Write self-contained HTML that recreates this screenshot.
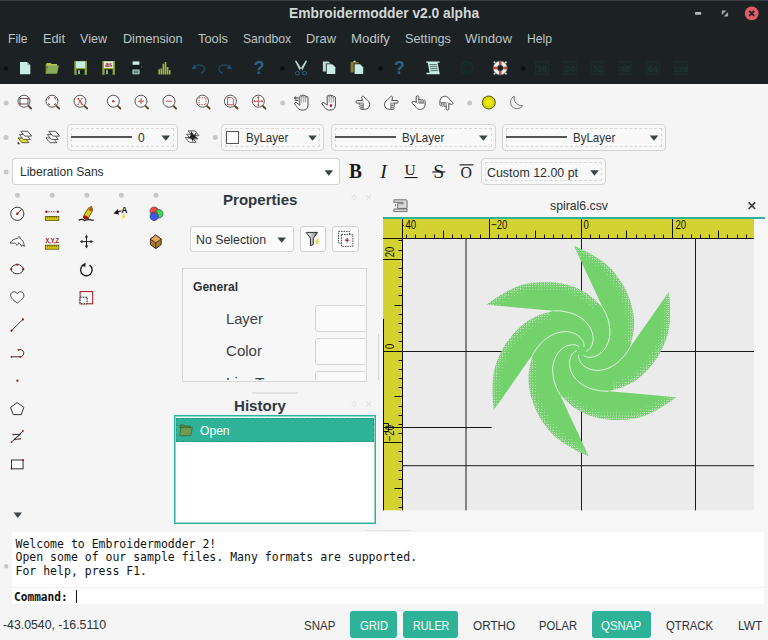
<!DOCTYPE html>
<html><head><meta charset="utf-8"><title>Embroidermodder v2.0 alpha</title>
<style>
html,body{margin:0;padding:0;}
body{width:768px;height:640px;overflow:hidden;background:#f5f5f5;position:relative;font-family:"Liberation Sans",sans-serif;font-size:13px;color:#2b3235;}
.a{position:absolute;box-sizing:border-box;}
.tx{position:absolute;white-space:pre;transform-origin:0 50%;}
.combo{border:1px solid #d4d4d4;border-radius:4px;background:#f9f9f9;}
.combo i{position:absolute;left:3px;top:3px;right:3px;bottom:3px;border:1px dashed #d8d8d8;}
.wbox{border:1px solid #d4d4d4;border-radius:3px;background:#fff;}
.btn{border:1px solid #d0d0d0;border-radius:3px;background:#fbfbfb;}
.sbb{top:611px;height:27px;background:#2eb398;border-radius:3px;}
svg{position:absolute;left:0;top:0;}

</style></head><body>
<div class="a" style="left:0;top:0;width:768px;height:84px;background:#1c2124"></div>
<div class="a" style="left:0;top:0;width:768px;height:1px;background:#3a4043"></div>
<!-- toolbar3 combos -->
<div class="a combo" style="left:67px;top:123.8px;width:111px;height:26.8px"><i></i></div>
<div class="a combo" style="left:221px;top:123.8px;width:103px;height:26.8px"><i></i></div>
<div class="a combo" style="left:331px;top:123.8px;width:164.5px;height:26.8px"><i></i></div>
<div class="a combo" style="left:502px;top:123.8px;width:163.6px;height:26.8px"><i></i></div>
<div class="a" style="left:226px;top:130.5px;width:13px;height:13px;background:#fff;border:1px solid #555"></div>
<!-- toolbar4 -->
<div class="a wbox" style="left:11.6px;top:158px;width:328.8px;height:26.5px"></div>
<div class="a combo" style="left:481.2px;top:158.2px;width:125px;height:26.4px"><i></i></div>
<!-- properties -->
<div class="a wbox" style="left:190px;top:225.5px;width:103.5px;height:26px;background:#fbfbfb"></div>
<div class="a btn" style="left:299.5px;top:225.5px;width:26.5px;height:26px"></div>
<div class="a btn" style="left:332px;top:225.5px;width:26.5px;height:26px"></div>
<div class="a" style="left:182px;top:268px;width:185px;height:114px;border:1px solid #d6d6d6;background:#f7f7f7"></div>
<div class="a" style="left:183px;top:269px;width:182px;height:110.6px;overflow:hidden">
  <div class="a wbox" style="left:132.3px;top:36.2px;width:70px;height:26.5px;background:#fafafa"></div>
  <div class="a wbox" style="left:132.3px;top:69.2px;width:70px;height:26.5px;background:#fafafa"></div>
  <div class="a wbox" style="left:132.3px;top:102px;width:70px;height:26.5px;background:#fafafa"></div>
  <div class="tx" style="left:42.8px;top:105.48px;font-size:14.2px;line-height:18px;color:#3a4246;transform:scaleX(1.08)">LineType</div>
</div>
<div class="a" style="left:377.5px;top:334px;width:1.6px;height:45.6px;background:#d2d2d2"></div>
<div class="a" style="left:251.5px;top:392.2px;width:46px;height:1.6px;background:#e2e2e2"></div>
<!-- history -->
<div class="a" style="left:173.5px;top:415px;width:202.5px;height:109px;border:1px solid #2eb398;background:#fff;box-shadow:inset 0 0 0 1px #8fd6c6"></div>
<div class="a" style="left:176px;top:418px;width:197.5px;height:23.5px;background:#2eb398"><div class="a" style="left:0;top:0;right:0;bottom:0;border:1px dashed #27977f"></div></div>
<div class="a" style="left:383px;top:219px;width:385px;height:310px;background:#f7f7f7"></div>
<!-- tab underline -->
<div class="a" style="left:383px;top:217px;width:382px;height:2px;background:#2eb398"></div>
<!-- console -->
<div class="a" style="left:11.5px;top:532px;width:752.5px;height:72px;background:#fff"></div>
<div class="a" style="left:11.5px;top:586.5px;width:752.5px;height:1px;background:#f2f2f2"></div>
<div class="a" style="left:76px;top:590px;width:1px;height:13px;background:#111"></div>
<div class="a" style="left:365px;top:529.5px;width:46px;height:1.8px;background:#e4e4e4"></div>
<!-- status buttons -->
<div class="a sbb" style="left:350.2px;width:47px"></div>
<div class="a sbb" style="left:403px;width:55px"></div>
<div class="a sbb" style="left:592px;width:59px"></div>

<svg width="768" height="640" viewBox="0 0 768 640"><rect x="403.0" y="239.0" width="351.0" height="271.3" fill="#ebebeb"/>
<rect x="465.5" y="239.0" width="1" height="271.3" fill="#1a1a1a"/>
<rect x="581" y="239.0" width="1" height="271.3" fill="#1a1a1a"/>
<rect x="695" y="239.0" width="1" height="271.3" fill="#1a1a1a"/>
<rect x="403.0" y="351" width="351.0" height="1" fill="#1a1a1a"/>
<rect x="403.0" y="465.2" width="351.0" height="1" fill="#1a1a1a"/>
<path d="M573.9,245.8 L581.3,248.9 L588.2,252.5 L594.6,256.3 L600.6,260.0 L606.2,264.2 L611.2,268.9 L615.5,274.1 L619.4,279.4 L622.8,284.6 L625.7,289.9 L628.0,295.3 L630.0,300.5 L631.6,305.7 L632.8,310.8 L633.6,315.7 L634.0,320.6 L634.0,325.3 L633.7,329.8 L633.1,334.2 L632.2,338.3 L631.1,342.2 L630.1,345.9 L628.5,349.4 L626.5,352.6 L624.2,355.5 L621.8,358.1 L619.6,360.5 L617.1,362.6 L614.6,364.5 L612.1,366.0 L609.7,367.4 L607.1,368.4 L604.6,369.2 L602.1,369.7 L599.7,370.1 L597.4,370.2 L595.2,370.1 L593.1,369.8 L591.0,369.3 L589.2,368.7 L587.5,368.0 L585.9,367.2 L584.5,366.2 L583.3,365.1 L582.2,364.0 L581.3,363.0 L580.5,362.1 L579.9,361.0 L579.4,360.0 L579.0,358.9 L578.8,357.8 L578.7,356.8 L578.7,355.9 L578.8,355.1 L578.9,354.2 L579.2,353.5 L579.6,352.7 L580.1,352.1 L580.7,351.5 L581.3,351.0 L581.3,351.0 L581.4,351.8 L581.6,352.6 L582.0,353.3 L582.4,354.0 L582.9,354.7 L583.6,355.2 L584.3,355.7 L585.1,356.2 L586.0,356.5 L587.0,356.9 L588.1,357.1 L589.3,357.2 L590.5,357.2 L591.7,357.0 L593.0,356.7 L594.5,356.3 L596.1,355.8 L597.6,355.1 L599.1,354.1 L600.6,353.0 L602.0,351.7 L603.5,350.2 L604.8,348.5 L606.0,346.6 L607.1,344.6 L607.9,342.3 L608.7,339.9 L609.3,337.3 L609.7,334.6 L609.7,331.8 L609.6,328.9 L609.3,325.8 L608.7,322.6 L607.8,319.5 L606.7,316.1 L605.3,312.7 L603.5,309.3 Q588.7,277.5 573.9,245.8 Z M668.8,292.0 L669.7,299.9 L670.0,307.7 L670.0,315.2 L669.7,322.3 L669.0,329.1 L667.3,335.8 L665.0,342.2 L662.4,348.2 L659.6,353.7 L656.4,358.9 L652.9,363.6 L649.4,368.0 L645.7,371.9 L641.9,375.5 L638.0,378.7 L634.0,381.4 L629.9,383.8 L625.8,385.8 L621.8,387.5 L617.8,388.8 L613.8,389.8 L610.1,390.7 L606.3,391.1 L602.5,390.9 L598.8,390.4 L595.4,389.7 L592.2,388.9 L589.1,387.9 L586.3,386.6 L583.7,385.2 L581.3,383.7 L579.1,382.1 L577.2,380.3 L575.5,378.4 L574.0,376.5 L572.7,374.6 L571.7,372.6 L570.9,370.6 L570.3,368.6 L569.9,366.7 L569.7,364.9 L569.6,363.1 L569.7,361.4 L570.1,359.8 L570.5,358.3 L570.9,357.0 L571.3,355.9 L571.9,354.8 L572.6,353.8 L573.3,353.0 L574.2,352.3 L574.9,351.7 L575.7,351.2 L576.5,350.8 L577.3,350.6 L578.1,350.4 L579.0,350.4 L579.8,350.5 L580.6,350.7 L581.3,351.0 L581.3,351.0 L580.7,351.5 L580.1,352.1 L579.6,352.7 L579.2,353.5 L578.9,354.2 L578.8,355.1 L578.7,355.9 L578.7,356.8 L578.8,357.8 L579.0,358.9 L579.4,360.0 L579.9,361.0 L580.5,362.1 L581.3,363.0 L582.2,364.0 L583.3,365.1 L584.5,366.2 L585.9,367.2 L587.5,368.0 L589.2,368.7 L591.0,369.3 L593.1,369.8 L595.2,370.1 L597.4,370.2 L599.7,370.1 L602.1,369.7 L604.6,369.2 L607.1,368.4 L609.7,367.4 L612.1,366.0 L614.6,364.5 L617.1,362.6 L619.6,360.5 L621.8,358.1 L624.2,355.5 L626.5,352.6 L628.5,349.4 Q648.7,320.7 668.8,292.0 Z M676.1,397.2 L669.7,402.1 L663.1,406.2 L656.7,409.9 L650.4,413.2 L644.1,416.0 L637.5,417.9 L630.7,419.1 L624.3,419.8 L618.1,420.1 L612.0,420.0 L606.2,419.3 L600.6,418.4 L595.4,417.2 L590.4,415.7 L585.7,413.9 L581.3,411.8 L577.2,409.5 L573.4,407.0 L570.0,404.3 L566.8,401.5 L564.0,398.6 L561.3,395.8 L559.1,392.7 L557.3,389.3 L555.9,385.9 L554.8,382.5 L553.9,379.4 L553.3,376.2 L553.0,373.1 L552.9,370.2 L552.9,367.4 L553.3,364.7 L553.9,362.1 L554.7,359.7 L555.5,357.4 L556.6,355.4 L557.8,353.5 L559.1,351.8 L560.6,350.3 L562.0,349.0 L563.5,347.9 L565.0,346.9 L566.5,346.2 L568.1,345.7 L569.6,345.3 L570.9,345.0 L572.1,344.8 L573.3,344.8 L574.5,344.9 L575.6,345.1 L576.6,345.5 L577.5,345.8 L578.3,346.3 L579.0,346.8 L579.7,347.3 L580.2,348.0 L580.6,348.7 L581.0,349.4 L581.2,350.2 L581.3,351.0 L581.3,351.0 L580.6,350.7 L579.8,350.5 L579.0,350.4 L578.1,350.4 L577.3,350.6 L576.5,350.8 L575.7,351.2 L574.9,351.7 L574.2,352.3 L573.3,353.0 L572.6,353.8 L571.9,354.8 L571.3,355.9 L570.9,357.0 L570.5,358.3 L570.1,359.8 L569.7,361.4 L569.6,363.1 L569.7,364.9 L569.9,366.7 L570.3,368.6 L570.9,370.6 L571.7,372.6 L572.7,374.6 L574.0,376.5 L575.5,378.4 L577.2,380.3 L579.1,382.1 L581.3,383.7 L583.7,385.2 L586.3,386.6 L589.1,387.9 L592.2,388.9 L595.4,389.7 L598.8,390.4 L602.5,390.9 L606.3,391.1 Q641.2,394.2 676.1,397.2 Z M588.7,456.2 L581.3,453.1 L574.4,449.5 L568.0,445.7 L562.0,442.0 L556.4,437.8 L551.4,433.1 L547.1,427.9 L543.2,422.6 L539.8,417.4 L536.9,412.1 L534.6,406.7 L532.6,401.5 L531.0,396.3 L529.8,391.2 L529.0,386.3 L528.6,381.4 L528.6,376.7 L528.9,372.2 L529.5,367.8 L530.4,363.7 L531.5,359.8 L532.5,356.1 L534.1,352.6 L536.1,349.4 L538.4,346.5 L540.8,343.9 L543.0,341.5 L545.5,339.4 L548.0,337.5 L550.5,336.0 L552.9,334.6 L555.5,333.6 L558.0,332.8 L560.5,332.3 L562.9,331.9 L565.2,331.8 L567.4,331.9 L569.5,332.2 L571.6,332.7 L573.4,333.3 L575.1,334.0 L576.7,334.8 L578.1,335.8 L579.3,336.9 L580.4,338.0 L581.3,339.0 L582.1,339.9 L582.7,341.0 L583.2,342.0 L583.6,343.1 L583.8,344.2 L583.9,345.2 L583.9,346.1 L583.8,346.9 L583.7,347.8 L583.4,348.5 L583.0,349.3 L582.5,349.9 L581.9,350.5 L581.3,351.0 L581.3,351.0 L581.2,350.2 L581.0,349.4 L580.6,348.7 L580.2,348.0 L579.7,347.3 L579.0,346.8 L578.3,346.3 L577.5,345.8 L576.6,345.5 L575.6,345.1 L574.5,344.9 L573.3,344.8 L572.1,344.8 L570.9,345.0 L569.6,345.3 L568.1,345.7 L566.5,346.2 L565.0,346.9 L563.5,347.9 L562.0,349.0 L560.6,350.3 L559.1,351.8 L557.8,353.5 L556.6,355.4 L555.5,357.4 L554.7,359.7 L553.9,362.1 L553.3,364.7 L552.9,367.4 L552.9,370.2 L553.0,373.1 L553.3,376.2 L553.9,379.4 L554.8,382.5 L555.9,385.9 L557.3,389.3 L559.1,392.7 Q573.9,424.5 588.7,456.2 Z M493.8,410.0 L492.9,402.1 L492.6,394.3 L492.6,386.8 L492.9,379.7 L493.6,372.9 L495.3,366.2 L497.6,359.8 L500.2,353.8 L503.0,348.3 L506.2,343.1 L509.7,338.4 L513.2,334.0 L516.9,330.1 L520.7,326.5 L524.6,323.3 L528.6,320.6 L532.7,318.2 L536.8,316.2 L540.8,314.5 L544.8,313.2 L548.8,312.2 L552.5,311.3 L556.3,310.9 L560.1,311.1 L563.8,311.6 L567.2,312.3 L570.4,313.1 L573.5,314.1 L576.3,315.4 L578.9,316.8 L581.3,318.3 L583.5,319.9 L585.4,321.7 L587.1,323.6 L588.6,325.5 L589.9,327.4 L590.9,329.4 L591.7,331.4 L592.3,333.4 L592.7,335.3 L592.9,337.1 L593.0,338.9 L592.9,340.6 L592.5,342.2 L592.1,343.7 L591.7,345.0 L591.3,346.1 L590.7,347.2 L590.0,348.2 L589.3,349.0 L588.4,349.7 L587.7,350.3 L586.9,350.8 L586.1,351.2 L585.3,351.4 L584.5,351.6 L583.6,351.6 L582.8,351.5 L582.0,351.3 L581.3,351.0 L581.3,351.0 L581.9,350.5 L582.5,349.9 L583.0,349.3 L583.4,348.5 L583.7,347.8 L583.8,346.9 L583.9,346.1 L583.9,345.2 L583.8,344.2 L583.6,343.1 L583.2,342.0 L582.7,341.0 L582.1,339.9 L581.3,339.0 L580.4,338.0 L579.3,336.9 L578.1,335.8 L576.7,334.8 L575.1,334.0 L573.4,333.3 L571.6,332.7 L569.5,332.2 L567.4,331.9 L565.2,331.8 L562.9,331.9 L560.5,332.3 L558.0,332.8 L555.5,333.6 L552.9,334.6 L550.5,336.0 L548.0,337.5 L545.5,339.4 L543.0,341.5 L540.8,343.9 L538.4,346.5 L536.1,349.4 L534.1,352.6 Q513.9,381.3 493.8,410.0 Z M486.5,304.8 L492.9,299.9 L499.5,295.8 L505.9,292.1 L512.2,288.8 L518.5,286.0 L525.1,284.1 L531.9,282.9 L538.3,282.2 L544.5,281.9 L550.6,282.0 L556.4,282.7 L562.0,283.6 L567.2,284.8 L572.2,286.3 L576.9,288.1 L581.3,290.2 L585.4,292.5 L589.2,295.0 L592.6,297.7 L595.8,300.5 L598.6,303.4 L601.3,306.2 L603.5,309.3 L605.3,312.7 L606.7,316.1 L607.8,319.5 L608.7,322.6 L609.3,325.8 L609.6,328.9 L609.7,331.8 L609.7,334.6 L609.3,337.3 L608.7,339.9 L607.9,342.3 L607.1,344.6 L606.0,346.6 L604.8,348.5 L603.5,350.2 L602.0,351.7 L600.6,353.0 L599.1,354.1 L597.6,355.1 L596.1,355.8 L594.5,356.3 L593.0,356.7 L591.7,357.0 L590.5,357.2 L589.3,357.2 L588.1,357.1 L587.0,356.9 L586.0,356.5 L585.1,356.2 L584.3,355.7 L583.6,355.2 L582.9,354.7 L582.4,354.0 L582.0,353.3 L581.6,352.6 L581.4,351.8 L581.3,351.0 L581.3,351.0 L582.0,351.3 L582.8,351.5 L583.6,351.6 L584.5,351.6 L585.3,351.4 L586.1,351.2 L586.9,350.8 L587.7,350.3 L588.4,349.7 L589.3,349.0 L590.0,348.2 L590.7,347.2 L591.3,346.1 L591.7,345.0 L592.1,343.7 L592.5,342.2 L592.9,340.6 L593.0,338.9 L592.9,337.1 L592.7,335.3 L592.3,333.4 L591.7,331.4 L590.9,329.4 L589.9,327.4 L588.6,325.5 L587.1,323.6 L585.4,321.7 L583.5,319.9 L581.3,318.3 L578.9,316.8 L576.3,315.4 L573.5,314.1 L570.4,313.1 L567.2,312.3 L563.8,311.6 L560.1,311.1 L556.3,310.9 Q521.4,307.8 486.5,304.8 Z" fill="#73d26b"/>
<defs><pattern id="stip" width="2" height="2" patternUnits="userSpaceOnUse"><rect x="0" y="0" width="1" height="1" fill="#ebebeb" opacity="0.55"/></pattern><pattern id="stip2" width="3" height="3" patternUnits="userSpaceOnUse"><rect x="1" y="1" width="1" height="1" fill="#ebebeb" opacity="0.45"/></pattern><clipPath id="ac0"><path d="M573.9,245.8 L581.3,248.9 L588.2,252.5 L594.6,256.3 L600.6,260.0 L606.2,264.2 L611.2,268.9 L615.5,274.1 L619.4,279.4 L622.8,284.6 L625.7,289.9 L628.0,295.3 L630.0,300.5 L631.6,305.7 L632.8,310.8 L633.6,315.7 L634.0,320.6 L634.0,325.3 L633.7,329.8 L633.1,334.2 L632.2,338.3 L631.1,342.2 L630.1,345.9 L628.5,349.4 L626.5,352.6 L624.2,355.5 L621.8,358.1 L619.6,360.5 L617.1,362.6 L614.6,364.5 L612.1,366.0 L609.7,367.4 L607.1,368.4 L604.6,369.2 L602.1,369.7 L599.7,370.1 L597.4,370.2 L595.2,370.1 L593.1,369.8 L591.0,369.3 L589.2,368.7 L587.5,368.0 L585.9,367.2 L584.5,366.2 L583.3,365.1 L582.2,364.0 L581.3,363.0 L580.5,362.1 L579.9,361.0 L579.4,360.0 L579.0,358.9 L578.8,357.8 L578.7,356.8 L578.7,355.9 L578.8,355.1 L578.9,354.2 L579.2,353.5 L579.6,352.7 L580.1,352.1 L580.7,351.5 L581.3,351.0 L581.3,351.0 L581.4,351.8 L581.6,352.6 L582.0,353.3 L582.4,354.0 L582.9,354.7 L583.6,355.2 L584.3,355.7 L585.1,356.2 L586.0,356.5 L587.0,356.9 L588.1,357.1 L589.3,357.2 L590.5,357.2 L591.7,357.0 L593.0,356.7 L594.5,356.3 L596.1,355.8 L597.6,355.1 L599.1,354.1 L600.6,353.0 L602.0,351.7 L603.5,350.2 L604.8,348.5 L606.0,346.6 L607.1,344.6 L607.9,342.3 L608.7,339.9 L609.3,337.3 L609.7,334.6 L609.7,331.8 L609.6,328.9 L609.3,325.8 L608.7,322.6 L607.8,319.5 L606.7,316.1 L605.3,312.7 L603.5,309.3 Q588.7,277.5 573.9,245.8 Z"/></clipPath><clipPath id="ac1"><path d="M668.8,292.0 L669.7,299.9 L670.0,307.7 L670.0,315.2 L669.7,322.3 L669.0,329.1 L667.3,335.8 L665.0,342.2 L662.4,348.2 L659.6,353.7 L656.4,358.9 L652.9,363.6 L649.4,368.0 L645.7,371.9 L641.9,375.5 L638.0,378.7 L634.0,381.4 L629.9,383.8 L625.8,385.8 L621.8,387.5 L617.8,388.8 L613.8,389.8 L610.1,390.7 L606.3,391.1 L602.5,390.9 L598.8,390.4 L595.4,389.7 L592.2,388.9 L589.1,387.9 L586.3,386.6 L583.7,385.2 L581.3,383.7 L579.1,382.1 L577.2,380.3 L575.5,378.4 L574.0,376.5 L572.7,374.6 L571.7,372.6 L570.9,370.6 L570.3,368.6 L569.9,366.7 L569.7,364.9 L569.6,363.1 L569.7,361.4 L570.1,359.8 L570.5,358.3 L570.9,357.0 L571.3,355.9 L571.9,354.8 L572.6,353.8 L573.3,353.0 L574.2,352.3 L574.9,351.7 L575.7,351.2 L576.5,350.8 L577.3,350.6 L578.1,350.4 L579.0,350.4 L579.8,350.5 L580.6,350.7 L581.3,351.0 L581.3,351.0 L580.7,351.5 L580.1,352.1 L579.6,352.7 L579.2,353.5 L578.9,354.2 L578.8,355.1 L578.7,355.9 L578.7,356.8 L578.8,357.8 L579.0,358.9 L579.4,360.0 L579.9,361.0 L580.5,362.1 L581.3,363.0 L582.2,364.0 L583.3,365.1 L584.5,366.2 L585.9,367.2 L587.5,368.0 L589.2,368.7 L591.0,369.3 L593.1,369.8 L595.2,370.1 L597.4,370.2 L599.7,370.1 L602.1,369.7 L604.6,369.2 L607.1,368.4 L609.7,367.4 L612.1,366.0 L614.6,364.5 L617.1,362.6 L619.6,360.5 L621.8,358.1 L624.2,355.5 L626.5,352.6 L628.5,349.4 Q648.7,320.7 668.8,292.0 Z"/></clipPath><clipPath id="ac2"><path d="M676.1,397.2 L669.7,402.1 L663.1,406.2 L656.7,409.9 L650.4,413.2 L644.1,416.0 L637.5,417.9 L630.7,419.1 L624.3,419.8 L618.1,420.1 L612.0,420.0 L606.2,419.3 L600.6,418.4 L595.4,417.2 L590.4,415.7 L585.7,413.9 L581.3,411.8 L577.2,409.5 L573.4,407.0 L570.0,404.3 L566.8,401.5 L564.0,398.6 L561.3,395.8 L559.1,392.7 L557.3,389.3 L555.9,385.9 L554.8,382.5 L553.9,379.4 L553.3,376.2 L553.0,373.1 L552.9,370.2 L552.9,367.4 L553.3,364.7 L553.9,362.1 L554.7,359.7 L555.5,357.4 L556.6,355.4 L557.8,353.5 L559.1,351.8 L560.6,350.3 L562.0,349.0 L563.5,347.9 L565.0,346.9 L566.5,346.2 L568.1,345.7 L569.6,345.3 L570.9,345.0 L572.1,344.8 L573.3,344.8 L574.5,344.9 L575.6,345.1 L576.6,345.5 L577.5,345.8 L578.3,346.3 L579.0,346.8 L579.7,347.3 L580.2,348.0 L580.6,348.7 L581.0,349.4 L581.2,350.2 L581.3,351.0 L581.3,351.0 L580.6,350.7 L579.8,350.5 L579.0,350.4 L578.1,350.4 L577.3,350.6 L576.5,350.8 L575.7,351.2 L574.9,351.7 L574.2,352.3 L573.3,353.0 L572.6,353.8 L571.9,354.8 L571.3,355.9 L570.9,357.0 L570.5,358.3 L570.1,359.8 L569.7,361.4 L569.6,363.1 L569.7,364.9 L569.9,366.7 L570.3,368.6 L570.9,370.6 L571.7,372.6 L572.7,374.6 L574.0,376.5 L575.5,378.4 L577.2,380.3 L579.1,382.1 L581.3,383.7 L583.7,385.2 L586.3,386.6 L589.1,387.9 L592.2,388.9 L595.4,389.7 L598.8,390.4 L602.5,390.9 L606.3,391.1 Q641.2,394.2 676.1,397.2 Z"/></clipPath><clipPath id="ac3"><path d="M588.7,456.2 L581.3,453.1 L574.4,449.5 L568.0,445.7 L562.0,442.0 L556.4,437.8 L551.4,433.1 L547.1,427.9 L543.2,422.6 L539.8,417.4 L536.9,412.1 L534.6,406.7 L532.6,401.5 L531.0,396.3 L529.8,391.2 L529.0,386.3 L528.6,381.4 L528.6,376.7 L528.9,372.2 L529.5,367.8 L530.4,363.7 L531.5,359.8 L532.5,356.1 L534.1,352.6 L536.1,349.4 L538.4,346.5 L540.8,343.9 L543.0,341.5 L545.5,339.4 L548.0,337.5 L550.5,336.0 L552.9,334.6 L555.5,333.6 L558.0,332.8 L560.5,332.3 L562.9,331.9 L565.2,331.8 L567.4,331.9 L569.5,332.2 L571.6,332.7 L573.4,333.3 L575.1,334.0 L576.7,334.8 L578.1,335.8 L579.3,336.9 L580.4,338.0 L581.3,339.0 L582.1,339.9 L582.7,341.0 L583.2,342.0 L583.6,343.1 L583.8,344.2 L583.9,345.2 L583.9,346.1 L583.8,346.9 L583.7,347.8 L583.4,348.5 L583.0,349.3 L582.5,349.9 L581.9,350.5 L581.3,351.0 L581.3,351.0 L581.2,350.2 L581.0,349.4 L580.6,348.7 L580.2,348.0 L579.7,347.3 L579.0,346.8 L578.3,346.3 L577.5,345.8 L576.6,345.5 L575.6,345.1 L574.5,344.9 L573.3,344.8 L572.1,344.8 L570.9,345.0 L569.6,345.3 L568.1,345.7 L566.5,346.2 L565.0,346.9 L563.5,347.9 L562.0,349.0 L560.6,350.3 L559.1,351.8 L557.8,353.5 L556.6,355.4 L555.5,357.4 L554.7,359.7 L553.9,362.1 L553.3,364.7 L552.9,367.4 L552.9,370.2 L553.0,373.1 L553.3,376.2 L553.9,379.4 L554.8,382.5 L555.9,385.9 L557.3,389.3 L559.1,392.7 Q573.9,424.5 588.7,456.2 Z"/></clipPath><clipPath id="ac4"><path d="M493.8,410.0 L492.9,402.1 L492.6,394.3 L492.6,386.8 L492.9,379.7 L493.6,372.9 L495.3,366.2 L497.6,359.8 L500.2,353.8 L503.0,348.3 L506.2,343.1 L509.7,338.4 L513.2,334.0 L516.9,330.1 L520.7,326.5 L524.6,323.3 L528.6,320.6 L532.7,318.2 L536.8,316.2 L540.8,314.5 L544.8,313.2 L548.8,312.2 L552.5,311.3 L556.3,310.9 L560.1,311.1 L563.8,311.6 L567.2,312.3 L570.4,313.1 L573.5,314.1 L576.3,315.4 L578.9,316.8 L581.3,318.3 L583.5,319.9 L585.4,321.7 L587.1,323.6 L588.6,325.5 L589.9,327.4 L590.9,329.4 L591.7,331.4 L592.3,333.4 L592.7,335.3 L592.9,337.1 L593.0,338.9 L592.9,340.6 L592.5,342.2 L592.1,343.7 L591.7,345.0 L591.3,346.1 L590.7,347.2 L590.0,348.2 L589.3,349.0 L588.4,349.7 L587.7,350.3 L586.9,350.8 L586.1,351.2 L585.3,351.4 L584.5,351.6 L583.6,351.6 L582.8,351.5 L582.0,351.3 L581.3,351.0 L581.3,351.0 L581.9,350.5 L582.5,349.9 L583.0,349.3 L583.4,348.5 L583.7,347.8 L583.8,346.9 L583.9,346.1 L583.9,345.2 L583.8,344.2 L583.6,343.1 L583.2,342.0 L582.7,341.0 L582.1,339.9 L581.3,339.0 L580.4,338.0 L579.3,336.9 L578.1,335.8 L576.7,334.8 L575.1,334.0 L573.4,333.3 L571.6,332.7 L569.5,332.2 L567.4,331.9 L565.2,331.8 L562.9,331.9 L560.5,332.3 L558.0,332.8 L555.5,333.6 L552.9,334.6 L550.5,336.0 L548.0,337.5 L545.5,339.4 L543.0,341.5 L540.8,343.9 L538.4,346.5 L536.1,349.4 L534.1,352.6 Q513.9,381.3 493.8,410.0 Z"/></clipPath><clipPath id="ac5"><path d="M486.5,304.8 L492.9,299.9 L499.5,295.8 L505.9,292.1 L512.2,288.8 L518.5,286.0 L525.1,284.1 L531.9,282.9 L538.3,282.2 L544.5,281.9 L550.6,282.0 L556.4,282.7 L562.0,283.6 L567.2,284.8 L572.2,286.3 L576.9,288.1 L581.3,290.2 L585.4,292.5 L589.2,295.0 L592.6,297.7 L595.8,300.5 L598.6,303.4 L601.3,306.2 L603.5,309.3 L605.3,312.7 L606.7,316.1 L607.8,319.5 L608.7,322.6 L609.3,325.8 L609.6,328.9 L609.7,331.8 L609.7,334.6 L609.3,337.3 L608.7,339.9 L607.9,342.3 L607.1,344.6 L606.0,346.6 L604.8,348.5 L603.5,350.2 L602.0,351.7 L600.6,353.0 L599.1,354.1 L597.6,355.1 L596.1,355.8 L594.5,356.3 L593.0,356.7 L591.7,357.0 L590.5,357.2 L589.3,357.2 L588.1,357.1 L587.0,356.9 L586.0,356.5 L585.1,356.2 L584.3,355.7 L583.6,355.2 L582.9,354.7 L582.4,354.0 L582.0,353.3 L581.6,352.6 L581.4,351.8 L581.3,351.0 L581.3,351.0 L582.0,351.3 L582.8,351.5 L583.6,351.6 L584.5,351.6 L585.3,351.4 L586.1,351.2 L586.9,350.8 L587.7,350.3 L588.4,349.7 L589.3,349.0 L590.0,348.2 L590.7,347.2 L591.3,346.1 L591.7,345.0 L592.1,343.7 L592.5,342.2 L592.9,340.6 L593.0,338.9 L592.9,337.1 L592.7,335.3 L592.3,333.4 L591.7,331.4 L590.9,329.4 L589.9,327.4 L588.6,325.5 L587.1,323.6 L585.4,321.7 L583.5,319.9 L581.3,318.3 L578.9,316.8 L576.3,315.4 L573.5,314.1 L570.4,313.1 L567.2,312.3 L563.8,311.6 L560.1,311.1 L556.3,310.9 Q521.4,307.8 486.5,304.8 Z"/></clipPath></defs>
<g clip-path="url(#ac0)"><path d="M573.9,245.8 L579.5,248.1 L584.8,250.7 L589.8,253.5 L594.6,256.3 L599.2,259.1 L603.5,262.1 L607.5,265.3 L611.2,268.9 L614.5,272.8 L617.5,276.8 L620.3,280.7 L622.8,284.6 L625.0,288.6 L626.9,292.6 L628.5,296.7 L630.0,300.5 L631.3,304.4 L632.2,308.3 L633.0,312.0 L633.6,315.7 L633.9,319.4 L634.0,323.0 L634.0,326.4 L633.7,329.8 L633.3,333.1 L632.7,336.3 L632.0,339.3 L631.1,342.2" fill="none" stroke="url(#stip2)" stroke-width="16"/><path d="M573.9,245.8 L579.5,248.1 L584.8,250.7 L589.8,253.5 L594.6,256.3 L599.2,259.1 L603.5,262.1 L607.5,265.3 L611.2,268.9 L614.5,272.8 L617.5,276.8 L620.3,280.7 L622.8,284.6 L625.0,288.6 L626.9,292.6 L628.5,296.7 L630.0,300.5 L631.3,304.4 L632.2,308.3 L633.0,312.0 L633.6,315.7 L633.9,319.4 L634.0,323.0 L634.0,326.4 L633.7,329.8 L633.3,333.1 L632.7,336.3 L632.0,339.3 L631.1,342.2" fill="none" stroke="url(#stip)" stroke-width="7"/></g>
<g clip-path="url(#ac1)"><path d="M668.8,292.0 L669.5,298.0 L669.9,303.9 L670.0,309.6 L670.0,315.2 L669.9,320.5 L669.4,325.7 L668.7,330.8 L667.3,335.8 L665.6,340.6 L663.6,345.2 L661.7,349.6 L659.6,353.7 L657.2,357.6 L654.7,361.3 L652.0,364.7 L649.4,368.0 L646.6,371.0 L643.8,373.7 L640.9,376.3 L638.0,378.7 L635.0,380.8 L631.9,382.6 L628.9,384.3 L625.8,385.8 L622.8,387.1 L619.8,388.2 L616.8,389.0 L613.8,389.8" fill="none" stroke="url(#stip2)" stroke-width="16"/><path d="M668.8,292.0 L669.5,298.0 L669.9,303.9 L670.0,309.6 L670.0,315.2 L669.9,320.5 L669.4,325.7 L668.7,330.8 L667.3,335.8 L665.6,340.6 L663.6,345.2 L661.7,349.6 L659.6,353.7 L657.2,357.6 L654.7,361.3 L652.0,364.7 L649.4,368.0 L646.6,371.0 L643.8,373.7 L640.9,376.3 L638.0,378.7 L635.0,380.8 L631.9,382.6 L628.9,384.3 L625.8,385.8 L622.8,387.1 L619.8,388.2 L616.8,389.0 L613.8,389.8" fill="none" stroke="url(#stip)" stroke-width="7"/></g>
<g clip-path="url(#ac2)"><path d="M676.1,397.2 L671.3,400.9 L666.4,404.2 L661.5,407.1 L656.7,409.9 L652.0,412.5 L647.2,414.7 L642.5,416.6 L637.5,417.9 L632.4,418.8 L627.4,419.4 L622.7,419.9 L618.1,420.1 L613.5,420.1 L609.1,419.7 L604.7,419.1 L600.6,418.4 L596.7,417.6 L592.8,416.5 L589.2,415.3 L585.7,413.9 L582.4,412.4 L579.2,410.7 L576.2,408.9 L573.4,407.0 L570.8,405.0 L568.4,402.9 L566.1,400.7 L564.0,398.6" fill="none" stroke="url(#stip2)" stroke-width="16"/><path d="M676.1,397.2 L671.3,400.9 L666.4,404.2 L661.5,407.1 L656.7,409.9 L652.0,412.5 L647.2,414.7 L642.5,416.6 L637.5,417.9 L632.4,418.8 L627.4,419.4 L622.7,419.9 L618.1,420.1 L613.5,420.1 L609.1,419.7 L604.7,419.1 L600.6,418.4 L596.7,417.6 L592.8,416.5 L589.2,415.3 L585.7,413.9 L582.4,412.4 L579.2,410.7 L576.2,408.9 L573.4,407.0 L570.8,405.0 L568.4,402.9 L566.1,400.7 L564.0,398.6" fill="none" stroke="url(#stip)" stroke-width="7"/></g>
<g clip-path="url(#ac3)"><path d="M588.7,456.2 L583.1,453.9 L577.8,451.3 L572.8,448.5 L568.0,445.7 L563.4,442.9 L559.1,439.9 L555.1,436.7 L551.4,433.1 L548.1,429.2 L545.1,425.2 L542.3,421.3 L539.8,417.4 L537.6,413.4 L535.7,409.4 L534.1,405.3 L532.6,401.5 L531.3,397.6 L530.4,393.7 L529.6,390.0 L529.0,386.3 L528.7,382.6 L528.6,379.0 L528.6,375.6 L528.9,372.2 L529.3,368.9 L529.9,365.7 L530.6,362.7 L531.5,359.8" fill="none" stroke="url(#stip2)" stroke-width="16"/><path d="M588.7,456.2 L583.1,453.9 L577.8,451.3 L572.8,448.5 L568.0,445.7 L563.4,442.9 L559.1,439.9 L555.1,436.7 L551.4,433.1 L548.1,429.2 L545.1,425.2 L542.3,421.3 L539.8,417.4 L537.6,413.4 L535.7,409.4 L534.1,405.3 L532.6,401.5 L531.3,397.6 L530.4,393.7 L529.6,390.0 L529.0,386.3 L528.7,382.6 L528.6,379.0 L528.6,375.6 L528.9,372.2 L529.3,368.9 L529.9,365.7 L530.6,362.7 L531.5,359.8" fill="none" stroke="url(#stip)" stroke-width="7"/></g>
<g clip-path="url(#ac4)"><path d="M493.8,410.0 L493.1,404.0 L492.7,398.1 L492.6,392.4 L492.6,386.8 L492.7,381.5 L493.2,376.3 L493.9,371.2 L495.3,366.2 L497.0,361.4 L499.0,356.8 L500.9,352.4 L503.0,348.3 L505.4,344.4 L507.9,340.7 L510.6,337.3 L513.2,334.0 L516.0,331.0 L518.8,328.3 L521.7,325.7 L524.6,323.3 L527.6,321.2 L530.7,319.4 L533.7,317.7 L536.8,316.2 L539.8,314.9 L542.8,313.8 L545.8,313.0 L548.8,312.2" fill="none" stroke="url(#stip2)" stroke-width="16"/><path d="M493.8,410.0 L493.1,404.0 L492.7,398.1 L492.6,392.4 L492.6,386.8 L492.7,381.5 L493.2,376.3 L493.9,371.2 L495.3,366.2 L497.0,361.4 L499.0,356.8 L500.9,352.4 L503.0,348.3 L505.4,344.4 L507.9,340.7 L510.6,337.3 L513.2,334.0 L516.0,331.0 L518.8,328.3 L521.7,325.7 L524.6,323.3 L527.6,321.2 L530.7,319.4 L533.7,317.7 L536.8,316.2 L539.8,314.9 L542.8,313.8 L545.8,313.0 L548.8,312.2" fill="none" stroke="url(#stip)" stroke-width="7"/></g>
<g clip-path="url(#ac5)"><path d="M486.5,304.8 L491.3,301.1 L496.2,297.8 L501.1,294.9 L505.9,292.1 L510.6,289.5 L515.4,287.3 L520.1,285.4 L525.1,284.1 L530.2,283.2 L535.2,282.6 L539.9,282.1 L544.5,281.9 L549.1,281.9 L553.5,282.3 L557.9,282.9 L562.0,283.6 L565.9,284.4 L569.8,285.5 L573.4,286.7 L576.9,288.1 L580.2,289.6 L583.4,291.3 L586.4,293.1 L589.2,295.0 L591.8,297.0 L594.2,299.1 L596.5,301.3 L598.6,303.4" fill="none" stroke="url(#stip2)" stroke-width="16"/><path d="M486.5,304.8 L491.3,301.1 L496.2,297.8 L501.1,294.9 L505.9,292.1 L510.6,289.5 L515.4,287.3 L520.1,285.4 L525.1,284.1 L530.2,283.2 L535.2,282.6 L539.9,282.1 L544.5,281.9 L549.1,281.9 L553.5,282.3 L557.9,282.9 L562.0,283.6 L565.9,284.4 L569.8,285.5 L573.4,286.7 L576.9,288.1 L580.2,289.6 L583.4,291.3 L586.4,293.1 L589.2,295.0 L591.8,297.0 L594.2,299.1 L596.5,301.3 L598.6,303.4" fill="none" stroke="url(#stip)" stroke-width="7"/></g>
<path d="M629.7,347.6 L627.7,351.0 L625.6,354.1 L623.2,356.9 L620.9,359.4 L618.5,361.7 L616.1,363.7 L613.6,365.4 L611.1,366.8 L608.6,368.0 L606.0,369.0 L603.5,369.6 L601.1,370.1 L598.7,370.3 L596.4,370.4 L594.2,370.2 L592.1,369.8 L590.2,369.2 L588.4,368.5 L586.8,367.8 L585.3,366.9 L583.9,365.9 L582.7,364.8 L581.7,363.7 L580.9,362.8 L580.2,361.7 L579.6,360.7 L579.2,359.6 L578.9,358.5 L578.7,357.5 L578.6,356.6 L578.6,355.7 L578.7,354.8" fill="none" stroke="#eef8ec" stroke-width="1" opacity="0.9"/>
<path d="M608.4,391.2 L604.5,391.2 L600.8,390.9 L597.2,390.2 L593.8,389.5 L590.7,388.6 L587.7,387.4 L585.0,386.1 L582.5,384.7 L580.2,383.1 L578.1,381.4 L576.3,379.5 L574.7,377.7 L573.3,375.7 L572.1,373.8 L571.2,371.8 L570.5,369.8 L570.0,367.7 L569.6,365.9 L569.5,364.1 L569.5,362.4 L569.7,360.7 L570.1,359.1 L570.5,357.7 L570.9,356.5 L571.4,355.4 L572.1,354.4 L572.8,353.4 L573.6,352.6 L574.4,352.0 L575.1,351.4 L575.9,351.0 L576.7,350.7" fill="none" stroke="#eef8ec" stroke-width="1" opacity="0.9"/>
<path d="M560.0,394.6 L558.1,391.2 L556.5,387.8 L555.2,384.3 L554.2,381.1 L553.4,377.9 L553.0,374.8 L552.7,371.8 L552.7,368.9 L552.9,366.1 L553.4,363.4 L554.1,360.9 L554.9,358.6 L555.9,356.4 L557.0,354.4 L558.2,352.6 L559.6,351.0 L561.1,349.6 L562.6,348.4 L564.0,347.3 L565.6,346.5 L567.1,345.8 L568.7,345.4 L570.1,345.0 L571.3,344.8 L572.6,344.7 L573.8,344.7 L574.9,344.8 L576.0,345.1 L577.0,345.5 L577.8,345.9 L578.6,346.3 L579.3,346.9" fill="none" stroke="#eef8ec" stroke-width="1" opacity="0.9"/>
<path d="M532.9,354.4 L534.9,351.0 L537.0,347.9 L539.4,345.1 L541.7,342.6 L544.1,340.3 L546.5,338.3 L549.0,336.6 L551.5,335.2 L554.0,334.0 L556.6,333.0 L559.1,332.4 L561.5,331.9 L563.9,331.7 L566.2,331.6 L568.4,331.8 L570.5,332.2 L572.4,332.8 L574.2,333.5 L575.8,334.2 L577.3,335.1 L578.7,336.1 L579.9,337.2 L580.9,338.3 L581.7,339.2 L582.4,340.3 L583.0,341.3 L583.4,342.4 L583.7,343.5 L583.9,344.5 L584.0,345.4 L584.0,346.3 L583.9,347.2" fill="none" stroke="#eef8ec" stroke-width="1" opacity="0.9"/>
<path d="M554.2,310.8 L558.1,310.8 L561.8,311.1 L565.4,311.8 L568.8,312.5 L571.9,313.4 L574.9,314.6 L577.6,315.9 L580.1,317.3 L582.4,318.9 L584.5,320.6 L586.3,322.5 L587.9,324.3 L589.3,326.3 L590.5,328.2 L591.4,330.2 L592.1,332.2 L592.6,334.3 L593.0,336.1 L593.1,337.9 L593.1,339.6 L592.9,341.3 L592.5,342.9 L592.1,344.3 L591.7,345.5 L591.2,346.6 L590.5,347.6 L589.8,348.6 L589.0,349.4 L588.2,350.0 L587.5,350.6 L586.7,351.0 L585.9,351.3" fill="none" stroke="#eef8ec" stroke-width="1" opacity="0.9"/>
<path d="M602.6,307.4 L604.5,310.8 L606.1,314.2 L607.4,317.7 L608.4,320.9 L609.2,324.1 L609.6,327.2 L609.9,330.2 L609.9,333.1 L609.7,335.9 L609.2,338.6 L608.5,341.1 L607.7,343.4 L606.7,345.6 L605.6,347.6 L604.4,349.4 L603.0,351.0 L601.5,352.4 L600.0,353.6 L598.6,354.7 L597.0,355.5 L595.5,356.2 L593.9,356.6 L592.5,357.0 L591.3,357.2 L590.0,357.3 L588.8,357.3 L587.7,357.2 L586.6,356.9 L585.6,356.5 L584.8,356.1 L584.0,355.7 L583.3,355.1" fill="none" stroke="#eef8ec" stroke-width="1" opacity="0.9"/>
<rect x="383.0" y="219.0" width="371.0" height="19.5" fill="#d4d231"/>
<rect x="383.0" y="219.0" width="19.5" height="291.3" fill="#d4d231"/>
<path d="M406.5,238.5 v-4.0 M415.5,238.5 v-4.0 M425.5,238.5 v-4.0 M434.5,238.5 v-4.0 M443.5,238.5 v-8.0 M452.5,238.5 v-4.0 M461.5,238.5 v-4.0 M470.5,238.5 v-4.0 M480.5,238.5 v-4.0 M489.5,238.5 v-19.5 M498.5,238.5 v-4.0 M507.5,238.5 v-4.0 M516.5,238.5 v-4.0 M526.5,238.5 v-4.0 M535.5,238.5 v-8.0 M544.5,238.5 v-4.0 M553.5,238.5 v-4.0 M562.5,238.5 v-4.0 M571.5,238.5 v-4.0 M581.5,238.5 v-19.5 M590.5,238.5 v-4.0 M599.5,238.5 v-4.0 M608.5,238.5 v-4.0 M617.5,238.5 v-4.0 M626.5,238.5 v-8.0 M636.5,238.5 v-4.0 M645.5,238.5 v-4.0 M654.5,238.5 v-4.0 M663.5,238.5 v-4.0 M672.5,238.5 v-19.5 M682.5,238.5 v-4.0 M691.5,238.5 v-4.0 M700.5,238.5 v-4.0 M709.5,238.5 v-4.0 M718.5,238.5 v-8.0 M727.5,238.5 v-4.0 M737.5,238.5 v-4.0 M746.5,238.5 v-4.0 M402.5,507.5 h-4.0 M402.5,497.5 h-4.0 M402.5,488.5 h-8.0 M402.5,479.5 h-4.0 M402.5,470.5 h-4.0 M402.5,461.5 h-4.0 M402.5,451.5 h-4.0 M402.5,442.5 h-19.5 M402.5,433.5 h-4.0 M402.5,424.5 h-4.0 M402.5,415.5 h-4.0 M402.5,406.5 h-4.0 M402.5,396.5 h-8.0 M402.5,387.5 h-4.0 M402.5,378.5 h-4.0 M402.5,369.5 h-4.0 M402.5,360.5 h-4.0 M402.5,351.5 h-19.5 M402.5,341.5 h-4.0 M402.5,332.5 h-4.0 M402.5,323.5 h-4.0 M402.5,314.5 h-4.0 M402.5,305.5 h-8.0 M402.5,295.5 h-4.0 M402.5,286.5 h-4.0 M402.5,277.5 h-4.0 M402.5,268.5 h-4.0 M402.5,259.5 h-19.5 M402.5,250.5 h-4.0 M402.5,240.5 h-4.0" stroke="#111" stroke-width="1" fill="none"/>
<rect x="383.0" y="238.0" width="371.0" height="1" fill="#111"/>
<rect x="402.0" y="219.0" width="1" height="291.3" fill="#111"/>
<text transform="translate(405.5,229.2) scale(0.77,1)" font-family="Liberation Sans,sans-serif" font-size="12.4" fill="#111">40</text>
<rect x="403.2" y="225" width="0.9" height="1" fill="#111"/>
<text transform="translate(491.1,229.2) scale(0.77,1)" font-family="Liberation Sans,sans-serif" font-size="12.4" fill="#111">−20</text>
<text transform="translate(583.6,229.2) scale(0.77,1)" font-family="Liberation Sans,sans-serif" font-size="12.4" fill="#111">0</text>
<text transform="translate(675.4,229.2) scale(0.77,1)" font-family="Liberation Sans,sans-serif" font-size="12.4" fill="#111">20</text>
<text transform="translate(394,257.2) rotate(-90) scale(0.77,1.06)" font-family="Liberation Sans,sans-serif" font-size="12.4" fill="#111">20</text>
<text transform="translate(394,349.0) rotate(-90) scale(0.77,1.06)" font-family="Liberation Sans,sans-serif" font-size="12.4" fill="#111">0</text>
<text transform="translate(394,441.2) rotate(-90) scale(0.77,1.06)" font-family="Liberation Sans,sans-serif" font-size="12.4" fill="#111">−20</text>
<rect x="383" y="427" width="108.7" height="1" fill="#111"/>
<rect x="383" y="319" width="1" height="191.3" fill="#111"/>
<path d="M383,423.5 H388.5 V431.5 H383" fill="none" stroke="#111" stroke-width="1"/></svg>
<svg width="768" height="640" viewBox="0 0 768 640"><circle cx="6" cy="68.3" r="2.4" fill="#0d1012"/>
<circle cx="282.5" cy="68.3" r="2.4" fill="#0d1012"/>
<circle cx="380.6" cy="68.3" r="2.4" fill="#0d1012"/>
<circle cx="523.3" cy="68.3" r="2.4" fill="#0d1012"/>
<circle cx="6.2" cy="103" r="2.5" fill="#c8c8c8"/>
<circle cx="282.7" cy="103" r="2.5" fill="#c8c8c8"/>
<circle cx="469.7" cy="103" r="2.5" fill="#c8c8c8"/>
<circle cx="6" cy="137.5" r="2.5" fill="#c8c8c8"/>
<circle cx="215.3" cy="137.5" r="2.5" fill="#c8c8c8"/>
<circle cx="6.2" cy="172" r="2.5" fill="#c8c8c8"/>
<circle cx="17.5" cy="195.3" r="2.5" fill="#c8c8c8"/>
<circle cx="52.2" cy="195.3" r="2.5" fill="#c8c8c8"/>
<circle cx="86.8" cy="195.3" r="2.5" fill="#c8c8c8"/>
<circle cx="121.4" cy="195.3" r="2.5" fill="#c8c8c8"/>
<circle cx="156" cy="195.3" r="2.5" fill="#c8c8c8"/>
<circle cx="6.2" cy="566.3" r="2.2" fill="#c8c8c8"/>
<g transform="translate(25,68)"><path d="M-5,-6 H2 L5.3,-2.7 V6.3 H-5 Z" fill="#c8ebe4"/><path d="M2,-6 V-2.7 H5.3 Z" fill="#8fb0aa"/></g>
<g transform="translate(52.5,68)"><path d="M-6,-5 H-2 L-1,-4 H4.5 V-2 H-6Z" fill="#b5c846"/><path d="M-6.3,5.8 L-5,-2.6 H6.4 L4.6,5.8 Z" fill="#8cab5a"/><path d="M-6.3,5.8 L-6.3,-4" stroke="#b5c846" stroke-width="0.8"/></g>
<g transform="translate(80.6,68)"><rect x="-6.3" y="-7" width="12.6" height="13.8" fill="#8fa53a"/><rect x="-4.6" y="-6.6" width="9.2" height="6.6" fill="#c8ebe4"/><rect x="-4" y="1.2" width="8" height="5.6" fill="#10201c"/><rect x="-2.4" y="2.2" width="1.6" height="3.8" fill="#a9c7c1"/></g>
<g transform="translate(108.6,68)"><rect x="-6.3" y="-7" width="12.6" height="13.8" fill="#8fa53a"/><rect x="-4.6" y="-6.6" width="9.2" height="6.6" fill="#ece6e4"/><rect x="-4" y="1.2" width="8" height="5.6" fill="#10201c"/><rect x="-2.4" y="2.2" width="1.6" height="3.8" fill="#a9c7c1"/><text x="0" y="-1.2" text-anchor="middle" font-family="Liberation Serif,serif" font-weight="bold" font-size="8" fill="#a82828">as</text></g>
<g transform="translate(136,68)"><rect x="-6.5" y="-2.8" width="13" height="6" rx="1" fill="#0f1d1c"/><rect x="-3.4" y="-6.6" width="6.8" height="3.4" fill="#c8ebe4"/><rect x="-3.6" y="1.5" width="7.2" height="4.8" fill="#a9c7c1"/><rect x="-2.4" y="2.8" width="4.8" height="2.4" fill="#5d7d78"/><circle cx="5.6" cy="-1" r="0.7" fill="#c8503c"/></g>
<g transform="translate(164.4,68)"><path d="M-6,6.4 V1.2 h1.6 V6.4z M-3.9,6.4 V0.4 h1.6 V6.4z M-1.8,6.4 V-4.2 h1.6 V6.4z M0.3,6.4 V-6 h1.6 V6.4z M2.4,6.4 V-1 h1.6 V6.4z M4.5,6.4 V2.2 h1.6 V6.4z" fill="#a3b740"/></g>
<g transform="translate(198.2,68.4)"><path d="M-6.8,0.9 L-4,-4 L-1.6,0.6 Z" fill="#22516e"/><path d="M-3.6,-1.4 C-1,-4.2 4,-4.4 6,-1 C7.4,1.6 5.4,4 3,4.6" fill="none" stroke="#1f4a63" stroke-width="1.4" stroke-linecap="round"/></g>
<g transform="translate(225.3,68.4) scale(-1,1)"><path d="M-6.8,0.9 L-4,-4 L-1.6,0.6 Z" fill="#22516e"/><path d="M-3.6,-1.4 C-1,-4.2 4,-4.4 6,-1 C7.4,1.6 5.4,4 3,4.6" fill="none" stroke="#1f4a63" stroke-width="1.4" stroke-linecap="round"/></g>
<g transform="translate(259.2,68)"><text x="0" y="6" text-anchor="middle" font-family="Liberation Sans,sans-serif" font-weight="bold" font-size="17.5" fill="#2a6384">?</text></g>
<g transform="translate(399.3,68)"><text x="0" y="6" text-anchor="middle" font-family="Liberation Sans,sans-serif" font-weight="bold" font-size="17.5" fill="#2a6384">?</text></g>
<g transform="translate(301,68)"><path d="M-6.2,-7.2 L-4.6,-7.2 L1.6,2.6 L0,3.6 L-1.4,2.2 Z M6.2,-7.2 L4.6,-7.2 L-1.6,2.6 L0,3.6 L1.4,2.2 Z" fill="#b9d6d2"/><ellipse cx="-3.6" cy="5.2" rx="2.2" ry="1.7" fill="none" stroke="#2a6384" stroke-width="1"/><ellipse cx="3.6" cy="5.2" rx="2.2" ry="1.7" fill="none" stroke="#2a6384" stroke-width="1"/></g>
<g transform="translate(329.3,68)"><g transform="translate(-6.4,-6.4)"><path d="M0,0 H5.6 L8.6,3 V9.8 H0 Z" fill="#b9dbd4"/></g><g transform="translate(-2.6,-3.8)"><path d="M-0.8,-0.8 H6 L9.4,2.6 V9.8 H-0.8 Z" fill="#1c2124"/><path d="M0,0 H5.6 L8.6,3 V9.8 H0 Z" fill="#c8ebe4"/></g></g>
<g transform="translate(357.2,68)"><rect x="-6.6" y="-6" width="8" height="10.4" fill="#8a7a2a"/><path d="M-4.4,-6 L-2.6,-7.6 L-0.8,-6Z" fill="#c8ebe4"/><g transform="translate(-2.6,-3.8)"><path d="M-0.8,-0.8 H6 L9.4,2.6 V9.8 H-0.8 Z" fill="#1c2124"/><path d="M0,0 H5.6 L8.6,3 V9.8 H0 Z" fill="#c8ebe4"/></g></g>
<g transform="translate(432.8,68)"><path d="M-6.6,-6.6 H6.8 V-5.2 H4.8 L6.6,4.6 H6.8 V6.2 H-6.4 V4.8 H-3.2 L-5,-5.2 H-6.6Z" fill="#c8ebe4"/><path d="M-3.4,-3.4 h7.4 M-3,-1.4 h7.4 M-2.6,0.6 h7.4 M-2.2,2.6 h7.4" stroke="#48635f" stroke-width="0.9"/></g>
<g transform="translate(466.8,67.8)"><circle r="6" fill="none" stroke="#172f2b" stroke-width="1.8"/><path d="M2.4,-2.4 A3.4,3.4 0 1 0 2.4,2.4" fill="none" stroke="#172f2b" stroke-width="1.3"/></g>
<g transform="translate(500.2,68)"><circle r="5" fill="none" stroke="#e8eeee" stroke-width="4"/><path d="M0,-7 V-3 M0,7 V3 M-7,0 H-3 M7,0 H3" stroke="#c8402e" stroke-width="2.4"/><path d="M-6.4,-6.4 L-4.6,-4.6 M6.4,-6.4 L4.6,-4.6 M-6.4,6.4 L-4.6,4.6 M6.4,6.4 L4.6,4.6" stroke="#c8d4d4" stroke-width="1.6"/><circle r="7" fill="none" stroke="#5a6466" stroke-width="0.6"/></g>
<g transform="translate(542,68)"><rect x="-6.5" y="-6.5" width="13" height="13" fill="#1c2526" stroke="#1c2c2b" stroke-width="1"/><text x="0" y="3.6" text-anchor="middle" font-family="Liberation Sans,sans-serif" font-weight="bold" font-size="9.5" fill="#1d3431">16</text></g>
<g transform="translate(569.8,68)"><rect x="-6.5" y="-6.5" width="13" height="13" fill="#1c2526" stroke="#1c2c2b" stroke-width="1"/><text x="0" y="3.6" text-anchor="middle" font-family="Liberation Sans,sans-serif" font-weight="bold" font-size="9.5" fill="#1d3431">24</text></g>
<g transform="translate(597.7,68)"><rect x="-6.5" y="-6.5" width="13" height="13" fill="#1c2526" stroke="#1c2c2b" stroke-width="1"/><text x="0" y="3.6" text-anchor="middle" font-family="Liberation Sans,sans-serif" font-weight="bold" font-size="9.5" fill="#1d3431">32</text></g>
<g transform="translate(625.3,68)"><rect x="-6.5" y="-6.5" width="13" height="13" fill="#1c2526" stroke="#1c2c2b" stroke-width="1"/><text x="0" y="3.6" text-anchor="middle" font-family="Liberation Sans,sans-serif" font-weight="bold" font-size="9.5" fill="#1d3431">48</text></g>
<g transform="translate(653,68)"><rect x="-6.5" y="-6.5" width="13" height="13" fill="#1c2526" stroke="#1c2c2b" stroke-width="1"/><text x="0" y="3.6" text-anchor="middle" font-family="Liberation Sans,sans-serif" font-weight="bold" font-size="9.5" fill="#1d3431">64</text></g>
<g transform="translate(681,68)"><rect x="-6.5" y="-6.5" width="13" height="13" fill="#1c2526" stroke="#1c2c2b" stroke-width="1"/><text x="0" y="3.6" text-anchor="middle" font-family="Liberation Sans,sans-serif" font-weight="bold" font-size="8" fill="#1d3431">128</text></g>
<rect x="695" y="12.1" width="6.2" height="2.6" rx="0.6" fill="#b4bcc2"/>
<path d="M721.8,10.4 h4.6 l-4.6,4.6z M728.1,16.6 h-4.6 l4.6,-4.6z" fill="#a4acb2"/>
<circle cx="751.7" cy="13.4" r="6.9" fill="#e05c68"/><path d="M749.2,10.9 l5,5 M754.2,10.9 l-5,5" stroke="#1c2124" stroke-width="1.7"/>
<g transform="translate(24,101.2)"><path d="M4.2,4.4 L7.1,7.3" stroke="#54432a" stroke-width="1.8" stroke-linecap="round"/><circle r="6" fill="#fcfcfc" stroke="#4c4c4c" stroke-width="0.95"/><rect x="-4" y="-2.8" width="8" height="5.6" fill="none" stroke="#444" stroke-width="0.9"/><circle cx="-4" cy="2.8" r="0.9" fill="#b43a3a"/><circle cx="4" cy="-2.8" r="0.9" fill="#b43a3a"/></g>
<g transform="translate(52,101.2)"><path d="M4.2,4.4 L7.1,7.3" stroke="#54432a" stroke-width="1.8" stroke-linecap="round"/><circle r="6" fill="#fcfcfc" stroke="#4c4c4c" stroke-width="0.95"/><path d="M-3.4,-1.8 V-3.4 H-1.8 M3.4,-1.8 V-3.4 H1.8 M-3.4,1.8 V3.4 H-1.8 M3.4,1.8 V3.4 H1.8" fill="none" stroke="#b43a3a" stroke-width="0.9"/></g>
<g transform="translate(80,101.2)"><path d="M4.2,4.4 L7.1,7.3" stroke="#54432a" stroke-width="1.8" stroke-linecap="round"/><circle r="6" fill="#fcfcfc" stroke="#4c4c4c" stroke-width="0.95"/><text x="0" y="4" text-anchor="middle" font-family="Liberation Serif,serif" font-size="10.5" fill="#b43a3a">X</text></g>
<g transform="translate(113.3,101.2)"><path d="M4.2,4.4 L7.1,7.3" stroke="#54432a" stroke-width="1.8" stroke-linecap="round"/><circle r="6" fill="#fcfcfc" stroke="#4c4c4c" stroke-width="0.95"/><circle r="1.2" fill="#b43a3a"/></g>
<g transform="translate(141,101.2)"><path d="M4.2,4.4 L7.1,7.3" stroke="#54432a" stroke-width="1.8" stroke-linecap="round"/><circle r="6" fill="#fcfcfc" stroke="#4c4c4c" stroke-width="0.95"/><path d="M-3,0 H3 M0,-3 V3" stroke="#b43a3a" stroke-width="0.9"/></g>
<g transform="translate(169,101.2)"><path d="M4.2,4.4 L7.1,7.3" stroke="#54432a" stroke-width="1.8" stroke-linecap="round"/><circle r="6" fill="#fcfcfc" stroke="#4c4c4c" stroke-width="0.95"/><path d="M-3,0 H3" stroke="#b43a3a" stroke-width="0.9"/></g>
<g transform="translate(202.5,101.2)"><path d="M4.2,4.4 L7.1,7.3" stroke="#54432a" stroke-width="1.8" stroke-linecap="round"/><circle r="6" fill="#fcfcfc" stroke="#4c4c4c" stroke-width="0.95"/><rect x="-3.4" y="-3.4" width="6.8" height="6.8" fill="#fff" stroke="#b43a3a" stroke-width="0.9" stroke-dasharray="1.4,1"/></g>
<g transform="translate(230.4,101.2)"><path d="M4.2,4.4 L7.1,7.3" stroke="#54432a" stroke-width="1.8" stroke-linecap="round"/><circle r="6" fill="#fcfcfc" stroke="#4c4c4c" stroke-width="0.95"/><path d="M-2.8,-3.6 H1 L3,-1.6 V3.6 H-2.8Z" fill="#fff" stroke="#b43a3a" stroke-width="0.9"/></g>
<g transform="translate(258.3,101.2)"><path d="M4.2,4.4 L7.1,7.3" stroke="#54432a" stroke-width="1.8" stroke-linecap="round"/><circle r="6" fill="#fcfcfc" stroke="#4c4c4c" stroke-width="0.95"/><path d="M-4.6,0 H4.6 M0,-4.6 V4.6" stroke="#b43a3a" stroke-width="0.8"/><path d="M-5,0 l1.8,-1.2 v2.4z M5,0 l-1.8,-1.2 v2.4z M0,-5 l-1.2,1.8 h2.4z M0,5 l-1.2,-1.8 h2.4z" fill="#b43a3a"/></g>
<g transform="translate(301.8,102)"><path d="M-2,3.2 V-5.4 a1,1 0 0 1 2,0 V-6 a1,1 0 0 1 2,0 V-5.6 a1,1 0 0 1 2,0 V-4.4 a1.1,1.1 0 0 1 2.2,0 V3 C6.2,6 4.4,8 2,8 H-0.6 C-2.4,8 -4,6.2 -5.4,4.2 L-7.2,1.9 C-7.6,0.5 -6,0 -5,0.9 L-2,3.2Z" stroke="#4a4a4a" stroke-width="1" fill="#fff" stroke-linejoin="round"/><path d="M0,-5.4 V0.5 M2,-5.6 V0.5 M4,-4.4 V0.5" stroke="#6a6a6a" stroke-width="0.7"/><path d="M-7.4,-4 h4.4 M-7.4,-4 l1.8,-1.6 M-7.4,-4 l1.8,1.6 M-6.4,-1.6 h3" stroke="#333" stroke-width="1" fill="none"/></g>
<g transform="translate(329.2,102)"><path d="M-2,3.2 V-5.4 a1,1 0 0 1 2,0 V-6 a1,1 0 0 1 2,0 V-5.6 a1,1 0 0 1 2,0 V-4.4 a1.1,1.1 0 0 1 2.2,0 V3 C6.2,6 4.4,8 2,8 H-0.6 C-2.4,8 -4,6.2 -5.4,4.2 L-7.2,1.9 C-7.6,0.5 -6,0 -5,0.9 L-2,3.2Z" stroke="#4a4a4a" stroke-width="1" fill="#fff" stroke-linejoin="round"/><path d="M0,-5.4 V0.5 M2,-5.6 V0.5 M4,-4.4 V0.5" stroke="#6a6a6a" stroke-width="0.7"/><circle cx="1.8" cy="3.6" r="1.3" fill="#c01818"/></g>
<g transform="translate(363.2,102.6)"><path d="M-6,-2.1 H-0.8 L-1.6,-5 C-1.6,-6.4 -0.2,-6.8 0.6,-5.8 L3.4,-2.8 C6.4,-1.4 7.2,1.6 5.8,4.4 C4.8,6.2 3,6.8 0.6,6.8 H-1.8 C-3,6.8 -3.2,5.6 -2.6,5 C-3.6,4.6 -3.6,3.2 -2.8,2.8 C-3.8,2.4 -3.8,0.8 -2.8,0.5 H-6 C-7.6,0.5 -7.6,-2.1 -6,-2.1Z" stroke="#4a4a4a" stroke-width="1" fill="#fff" stroke-linejoin="round"/><path d="M-3,0.8 H0.2 V6.4 H-2.4Z" fill="#c4c4c4"/><path d="M-2.8,0.5 H0.2 M-2.8,2.8 H-0.2 M-2.6,5 H0 M-0.8,-2.1 L0.6,-0.8 M0.2,0.5 V6.4" stroke="#5a5a5a" stroke-width="0.7" fill="none"/></g>
<g transform="matrix(-1,0,0,1,391,102.6)"><path d="M-6,-2.1 H-0.8 L-1.6,-5 C-1.6,-6.4 -0.2,-6.8 0.6,-5.8 L3.4,-2.8 C6.4,-1.4 7.2,1.6 5.8,4.4 C4.8,6.2 3,6.8 0.6,6.8 H-1.8 C-3,6.8 -3.2,5.6 -2.6,5 C-3.6,4.6 -3.6,3.2 -2.8,2.8 C-3.8,2.4 -3.8,0.8 -2.8,0.5 H-6 C-7.6,0.5 -7.6,-2.1 -6,-2.1Z" stroke="#4a4a4a" stroke-width="1" fill="#fff" stroke-linejoin="round"/><path d="M-3,0.8 H0.2 V6.4 H-2.4Z" fill="#c4c4c4"/><path d="M-2.8,0.5 H0.2 M-2.8,2.8 H-0.2 M-2.6,5 H0 M-0.8,-2.1 L0.6,-0.8 M0.2,0.5 V6.4" stroke="#5a5a5a" stroke-width="0.7" fill="none"/></g>
<g transform="matrix(0,1,1,0,418.3,103)"><path d="M-6,-2.1 H-0.8 L-1.6,-5 C-1.6,-6.4 -0.2,-6.8 0.6,-5.8 L3.4,-2.8 C6.4,-1.4 7.2,1.6 5.8,4.4 C4.8,6.2 3,6.8 0.6,6.8 H-1.8 C-3,6.8 -3.2,5.6 -2.6,5 C-3.6,4.6 -3.6,3.2 -2.8,2.8 C-3.8,2.4 -3.8,0.8 -2.8,0.5 H-6 C-7.6,0.5 -7.6,-2.1 -6,-2.1Z" stroke="#4a4a4a" stroke-width="1" fill="#fff" stroke-linejoin="round"/><path d="M-3,0.8 H0.2 V6.4 H-2.4Z" fill="#c4c4c4"/><path d="M-2.8,0.5 H0.2 M-2.8,2.8 H-0.2 M-2.6,5 H0 M-0.8,-2.1 L0.6,-0.8 M0.2,0.5 V6.4" stroke="#5a5a5a" stroke-width="0.7" fill="none"/></g>
<g transform="matrix(0,-1,-1,0,446.7,102.8)"><path d="M-6,-2.1 H-0.8 L-1.6,-5 C-1.6,-6.4 -0.2,-6.8 0.6,-5.8 L3.4,-2.8 C6.4,-1.4 7.2,1.6 5.8,4.4 C4.8,6.2 3,6.8 0.6,6.8 H-1.8 C-3,6.8 -3.2,5.6 -2.6,5 C-3.6,4.6 -3.6,3.2 -2.8,2.8 C-3.8,2.4 -3.8,0.8 -2.8,0.5 H-6 C-7.6,0.5 -7.6,-2.1 -6,-2.1Z" stroke="#4a4a4a" stroke-width="1" fill="#fff" stroke-linejoin="round"/><path d="M-3,0.8 H0.2 V6.4 H-2.4Z" fill="#c4c4c4"/><path d="M-2.8,0.5 H0.2 M-2.8,2.8 H-0.2 M-2.6,5 H0 M-0.8,-2.1 L0.6,-0.8 M0.2,0.5 V6.4" stroke="#5a5a5a" stroke-width="0.7" fill="none"/></g>
<defs><radialGradient id="sun" cx="0.5" cy="0.5" r="0.5"><stop offset="0" stop-color="#f4f200"/><stop offset="0.6" stop-color="#e4e200"/><stop offset="1" stop-color="#c2c000"/></radialGradient></defs>
<g transform="translate(488.8,102.5)"><circle r="6.5" fill="url(#sun)" stroke="#5a5a18" stroke-width="1"/></g>
<g transform="translate(516.5,102.6)"><path d="M-2.2,-6.4 C-3,-1 0.6,3.4 6.2,3 C4,6.6 -1.6,7.2 -4.6,3.8 C-7.2,0.6 -6,-4.6 -2.2,-6.4Z" fill="#f0f0f0" stroke="#727272" stroke-width="1"/></g>
<g transform="translate(25,137.4)"><path d="M-7.0,0.5 L-0.1,0.5 L3.9,5.3 L-3.0,5.3 Z" fill="#e8e020" stroke="#4a4a4a" stroke-width="0.9" stroke-linejoin="round"/><path d="M-5.6,-2.8 L1.3,-2.8 L5.3,2.0 L-1.6,2.0 Z" fill="#fff" stroke="#4a4a4a" stroke-width="0.9" stroke-linejoin="round"/><path d="M-4.2,-6.1 L2.7,-6.1 L6.7,-1.3 L-0.2,-1.3 Z" fill="#fff" stroke="#4a4a4a" stroke-width="0.9" stroke-linejoin="round"/><path d="M-7.2,4.2 l2.4,2.6 l-2.6,0z" fill="#222"/></g>
<g transform="translate(53,137.4)"><path d="M-7.0,0.5 L-0.1,0.5 L3.9,5.3 L-3.0,5.3 Z" fill="#fff" stroke="#4a4a4a" stroke-width="0.9" stroke-linejoin="round"/><path d="M-5.6,-2.8 L1.3,-2.8 L5.3,2.0 L-1.6,2.0 Z" fill="#fff" stroke="#4a4a4a" stroke-width="0.9" stroke-linejoin="round"/><path d="M-4.2,-6.1 L2.7,-6.1 L6.7,-1.3 L-0.2,-1.3 Z" fill="#fff" stroke="#4a4a4a" stroke-width="0.9" stroke-linejoin="round"/></g>
<g transform="translate(192.3,137)"><path d="M-7.0,0.5 L-0.1,0.5 L3.9,5.3 L-3.0,5.3 Z" fill="#fff" stroke="#4a4a4a" stroke-width="0.9" stroke-linejoin="round"/><path d="M-5.6,-2.8 L1.3,-2.8 L5.3,2.0 L-1.6,2.0 Z" fill="#fff" stroke="#4a4a4a" stroke-width="0.9" stroke-linejoin="round"/><path d="M-4.2,-6.1 L2.7,-6.1 L6.7,-1.3 L-0.2,-1.3 Z" fill="#fff" stroke="#4a4a4a" stroke-width="0.9" stroke-linejoin="round"/><path d="M-1,-6 L1.6,-2 L4.6,-5.4 L2.6,-0.4 L5.4,1.4 L1.4,1.6 L0.6,5 L-1,1.2 L-4.6,1.6 L-2,-1 Z" fill="#222"/></g>
<rect x="71" y="136" width="61" height="2" fill="#555"/>
<rect x="335" y="136" width="61" height="2" fill="#555"/>
<rect x="506" y="136" width="61" height="2" fill="#555"/>
<path d="M161.5,135.4 h8.6 l-4.3,5.4z" fill="#3d4448"/>
<path d="M308.2,135.4 h8.6 l-4.3,5.4z" fill="#3d4448"/>
<path d="M479.0,135.4 h8.6 l-4.3,5.4z" fill="#3d4448"/>
<path d="M649.7,135.4 h8.6 l-4.3,5.4z" fill="#3d4448"/>
<path d="M324.5,170.3 h8.6 l-4.3,5.4z" fill="#3d4448"/>
<path d="M590.2,170.3 h8.6 l-4.3,5.4z" fill="#3d4448"/>
<path d="M277.4,237.4 h8.6 l-4.3,5.4z" fill="#3d4448"/>
<rect x="404.5" y="177" width="13.2" height="1.1" fill="#1a1a1a"/>
<rect x="432.3" y="171.4" width="13" height="1.1" fill="#1a1a1a"/>
<rect x="459.5" y="164.3" width="14" height="1.1" fill="#1a1a1a"/>
<g transform="translate(17.3,213.8)"><circle r="6.6" fill="#fcfcfc" stroke="#333" stroke-width="1"/><path d="M0,0 L4.6,-4.6" stroke="#a01414" stroke-width="1"/><circle cx="0" cy="0" r="1.2" fill="#a01414"/></g>
<g transform="translate(52,213.8)"><circle cx="-5.6" cy="-2" r="1.2" fill="#a01414"/><circle cx="5.8" cy="-2" r="1.2" fill="#a01414"/><path d="M-3.6,-2 H4" stroke="#a01414" stroke-width="1" stroke-dasharray="1.2,1.2"/><rect x="-6.6" y="2.6" width="13.4" height="4" fill="#d8cc10" stroke="#5a5208" stroke-width="0.8"/><path d="M-4.4,2.6 v2 M-2.2,2.6 v2 M0,2.6 v2 M2.2,2.6 v2 M4.4,2.6 v2" stroke="#5a5208" stroke-width="0.7"/></g>
<g transform="translate(52,241.6)"><text x="0.2" y="1" text-anchor="middle" font-family="Liberation Sans,sans-serif" font-weight="bold" font-size="7.6" fill="#a01414" textLength="13.6" lengthAdjust="spacingAndGlyphs">X,Y,Z</text><rect x="-6.6" y="3.6" width="13.4" height="4" fill="#d8cc10" stroke="#5a5208" stroke-width="0.8"/><path d="M-4.4,3.6 v2 M-2.2,3.6 v2 M0,3.6 v2 M2.2,3.6 v2 M4.4,3.6 v2" stroke="#5a5208" stroke-width="0.7"/></g>
<g transform="translate(86.3,213.6)"><path d="M-7.6,6.6 C-5,5.4 -3,5.6 -1.6,7 C0,5.6 3,5.6 7.4,6.8" fill="none" stroke="#222" stroke-width="1.3"/><path d="M5.2,-7.4 L6.4,-3.4 L1.6,5.4 C0,6.6 -2.6,5.4 -3,3.2 L1.6,-5 Z" fill="#d8cc10" stroke="#3a3208" stroke-width="0.7"/><path d="M5.2,-7.4 L6.4,-3.4 L4.6,-2 L2,-4.2 Z" fill="#b05a20"/><path d="M-3,3.2 C-2.6,5.4 0,6.6 1.6,5.4 L2.4,3.6 L-2,1.4Z" fill="#a81818"/></g>
<g transform="translate(120.8,213.8)"><path d="M-7.2,-0.2 L-2.6,-5 L-3,-2.6 L0.4,-3.6 L0.6,-2.6 L-2.6,-1.4 L-1.6,0.6 Z" fill="#111"/><text x="3.6" y="-0.6" text-anchor="middle" font-family="Liberation Sans,sans-serif" font-weight="bold" font-size="8.6" fill="#111">A</text><path d="M3.4,-0.4 L0.6,3.6 L2.4,3.4 L0.4,7 L5,2.2 L3,2.4 L5,-0.4Z" fill="#e8dc20"/></g>
<g transform="translate(155.8,213.8)"><circle cx="-1.6" cy="-2.6" r="4.2" fill="#f04848" stroke="#333" stroke-width="0.6"/><circle cx="3" cy="0" r="4.2" fill="#30e050" stroke="#333" stroke-width="0.6"/><circle cx="-1.6" cy="2.6" r="4.2" fill="#3858f0" stroke="#333" stroke-width="0.6"/><path d="M-1,-2.6 a3,3 0 0 1 3,2 L0,1Z" fill="#b04010"/></g>
<g transform="translate(17,241.8)"><path d="M-7,1.2 C-5.4,-1.6 -2.6,-3 0.4,-3.2 C1,-4.6 1.8,-5 3,-5 C2.8,-4.2 3,-3.4 3.4,-2.8 C5.4,-1.8 6.4,0 6.8,1.6 L7.4,4.6 L5,3 L4.4,4.6 C4,2.6 2.8,1.4 1.2,1 C1.6,2.4 1,3 -0.4,3.4 C-0.4,2.4 -1,1.6 -2,1.4 C-3.6,1.2 -5,1.6 -7,1.2Z" fill="#fcfcfc" stroke="#444" stroke-width="0.9" stroke-linejoin="round"/></g>
<g transform="translate(86.5,241.6)"><path d="M-4.6,0 H4.6 M0,-4.6 V4.6" stroke="#222" stroke-width="1"/><path d="M-6.8,0 l2.8,-1.7 v3.4z M6.8,0 l-2.8,-1.7 v3.4z M0,-6.8 l-1.7,2.8 h3.4z M0,6.8 l-1.7,-2.8 h3.4z" fill="#222"/></g>
<g transform="translate(155.8,241.6)"><path d="M0,-6.6 L5.4,-2.6 V3 L0,7 L-5.4,3 V-2.6Z" fill="#a87830" stroke="#2a1a08" stroke-width="0.9" stroke-linejoin="round"/><path d="M0,-6.6 L5.4,-2.6 L0,1.2 L-5.4,-2.6Z" fill="#e0a860" stroke="#2a1a08" stroke-width="0.7" stroke-linejoin="round"/><path d="M0,1.2 V7" stroke="#2a1a08" stroke-width="0.7"/></g>
<g transform="translate(17.2,269.2)"><ellipse rx="6" ry="4.6" fill="#fcfcfc" stroke="#333" stroke-width="1"/><circle cx="-6" cy="0" r="1.1" fill="#a01414"/><circle cx="6" cy="0" r="1.1" fill="#a01414"/><circle cx="0" cy="-4.6" r="1.1" fill="#a01414"/></g>
<g transform="translate(86.2,270)"><path d="M-1.4,-5.6 A5.8,5.8 0 1 0 3.4,-4.8" fill="none" stroke="#222" stroke-width="1.4"/><path d="M-5,-4.4 L-0.6,-7.6 L-0.8,-3Z" fill="#222"/></g>
<g transform="translate(17.3,297.4)"><path d="M0,5.6 C-3,3.4 -6.6,1 -6.6,-2.2 C-6.6,-4.6 -4.8,-5.6 -3.2,-5.6 C-1.8,-5.6 -0.6,-4.8 0,-3.6 C0.6,-4.8 1.8,-5.6 3.2,-5.6 C4.8,-5.6 6.6,-4.6 6.6,-2.2 C6.6,1 3,3.4 0,5.6Z" fill="#fcfcfc" stroke="#444" stroke-width="1"/></g>
<g transform="translate(86.5,297.6)"><rect x="-6.4" y="-6" width="12.6" height="12.2" fill="none" stroke="#a01414" stroke-width="1"/><rect x="-6.4" y="-0.4" width="7" height="6.6" fill="#f5f5f5" stroke="#222" stroke-width="1" stroke-dasharray="1.6,1"/></g>
<g transform="translate(17.2,325)"><path d="M-5.7,5.7 L5.7,-5.6" stroke="#333" stroke-width="1"/><circle cx="-5.7" cy="5.7" r="1.1" fill="#a01414"/><circle cx="5.7" cy="-5.6" r="1.1" fill="#a01414"/></g>
<g transform="translate(17.5,353.4)"><path d="M-6,3.4 H2.6 A3.6,3.6 0 1 0 1,-3.4" fill="none" stroke="#333" stroke-width="1"/><circle cx="-6" cy="3.4" r="0.9" fill="#a01414"/><circle cx="2.6" cy="3.4" r="0.9" fill="#a01414"/><circle cx="1" cy="-3.6" r="0.9" fill="#a01414"/></g>
<g transform="translate(17.4,380.7)"><circle cx="0" cy="0" r="1.1" fill="#a01414"/></g>
<g transform="translate(17.2,409)"><path d="M0,-6.4 L6.6,-1.6 L4,5.6 H-4 L-6.6,-1.6Z" fill="#fcfcfc" stroke="#333" stroke-width="1" stroke-linejoin="round"/></g>
<g transform="translate(17.3,436.6)"><path d="M-5.8,5.6 L5.6,-5.6 M-4.2,-2 L3.4,-2.4 L-3.4,3 L3,2.2" fill="none" stroke="#333" stroke-width="1"/><circle cx="-5.8" cy="5.6" r="0.9" fill="#a01414"/><circle cx="5.6" cy="-5.6" r="0.9" fill="#a01414"/><circle cx="-4.2" cy="-2" r="0.8" fill="#a01414"/><circle cx="3" cy="2.2" r="0.8" fill="#a01414"/></g>
<g transform="translate(17.3,464.4)"><rect x="-5.8" y="-4.4" width="11.6" height="8.8" fill="#fcfcfc" stroke="#333" stroke-width="1"/><circle cx="-5.8" cy="4.4" r="0.9" fill="#a01414"/><circle cx="5.8" cy="-4.4" r="0.9" fill="#a01414"/></g>
<path d="M13.6,512.6 h8.4 l-4.2,5.4z" fill="#3d4448"/>
<defs><linearGradient id="fg" x1="0" y1="0" x2="1" y2="0"><stop offset="0" stop-color="#fafafa"/><stop offset="0.55" stop-color="#bdbdbd"/><stop offset="1" stop-color="#6e6e6e"/></linearGradient></defs>
<g transform="translate(312.7,239)"><path d="M-6.4,-6.6 H4.8 L0.6,-0.6 V5.4 L-2.2,6.8 V-0.6Z" fill="url(#fg)" stroke="#333" stroke-width="1" stroke-linejoin="round"/><path d="M5.2,-0.6 L2.2,3.4 L4,3.2 L2.6,6.8 L6.8,2 L4.8,2.2 L6.6,-0.6Z" fill="#e8d810"/></g>
<g transform="translate(345.5,238.8)"><rect x="-7" y="-7.4" width="11" height="11.6" fill="none" stroke="#333" stroke-width="0.9" stroke-dasharray="1.5,1"/><rect x="-4" y="-4.4" width="11.4" height="12" fill="#fbfbfb" stroke="#333" stroke-width="0.9" stroke-dasharray="1.5,1"/><path d="M-0.6,1.4 h4.4 M1.6,-0.8 v4.4" stroke="#a01414" stroke-width="1"/></g>
<circle cx="354" cy="197.5" r="2" fill="none" stroke="#e2e2e2" stroke-width="1"/>
<path d="M366.4,195.2 l4.6,4.6 m0,-4.6 l-4.6,4.6" stroke="#e2e2e2" stroke-width="1.1"/>
<circle cx="354" cy="403.8" r="2" fill="none" stroke="#e2e2e2" stroke-width="1"/>
<path d="M366.4,401.5 l4.6,4.6 m0,-4.6 l-4.6,4.6" stroke="#e2e2e2" stroke-width="1.1"/>
<g transform="translate(186,430)"><path d="M-6,-5 H-2 L-1,-4 H4.5 V-2 H-6Z" fill="#5d8a3a" stroke="#2c5a2a" stroke-width="0.6"/><path d="M-6.3,5.8 L-5,-2.6 H6.4 L4.6,5.8 Z" fill="#6e9a50" stroke="#2c5a2a" stroke-width="0.6"/></g>
<g transform="translate(400.5,205.4)"><path d="M-6.6,-5.6 H5.6 a1,1 0 0 1 1,1 V3 H-3 V-1.6 H2.6 V-3 H-6.6Z M-6.6,3.6 H6.6 V6.2 H-6.6Z" fill="#d8d8d8" stroke="#6a6a6a" stroke-width="0.9" stroke-linejoin="round"/><path d="M-5,-1.4 v2.4" stroke="#6a6a6a" stroke-width="0.9"/></g>
<path d="M748.6,202.4 l6.6,6.6 m0,-6.6 l-6.6,6.6" stroke="#3a4145" stroke-width="1.7"/></svg>
<div class="tx" style="left:289.00px;top:5.22px;font-size:13.8px;line-height:18px;color:#d1d8d8;font-weight:bold;">Embroidermodder v2.0 alpha</div>
<div class="tx" style="left:8.00px;top:30.30px;font-size:13px;line-height:17px;color:#bdc5c5;transform:scaleX(0.9306);">File</div>
<div class="tx" style="left:43.00px;top:30.30px;font-size:13px;line-height:17px;color:#bdc5c5;transform:scaleX(0.9819);">Edit</div>
<div class="tx" style="left:80.00px;top:30.30px;font-size:13px;line-height:17px;color:#bdc5c5;transform:scaleX(0.9659);">View</div>
<div class="tx" style="left:123.00px;top:30.30px;font-size:13px;line-height:17px;color:#bdc5c5;transform:scaleX(0.9687);">Dimension</div>
<div class="tx" style="left:198.00px;top:30.30px;font-size:13px;line-height:17px;color:#bdc5c5;transform:scaleX(0.9882);">Tools</div>
<div class="tx" style="left:243.00px;top:30.30px;font-size:13px;line-height:17px;color:#bdc5c5;transform:scaleX(0.9352);">Sandbox</div>
<div class="tx" style="left:306.00px;top:30.30px;font-size:13px;line-height:17px;color:#bdc5c5;transform:scaleX(0.9887);">Draw</div>
<div class="tx" style="left:351.00px;top:30.30px;font-size:13px;line-height:17px;color:#bdc5c5;transform:scaleX(1.0184);">Modify</div>
<div class="tx" style="left:405.00px;top:30.30px;font-size:13px;line-height:17px;color:#bdc5c5;transform:scaleX(0.9790);">Settings</div>
<div class="tx" style="left:465.00px;top:30.30px;font-size:13px;line-height:17px;color:#bdc5c5;transform:scaleX(1.0162);">Window</div>
<div class="tx" style="left:527.00px;top:30.30px;font-size:13px;line-height:17px;color:#bdc5c5;transform:scaleX(0.9346);">Help</div>
<div class="tx" style="left:138.00px;top:128.70px;font-size:13px;line-height:17px;color:#2b3235;transform:scaleX(0.9261);">0</div>
<div class="tx" style="left:245.70px;top:128.70px;font-size:13px;line-height:17px;color:#2b3235;transform:scaleX(0.8867);">ByLayer</div>
<div class="tx" style="left:401.70px;top:128.70px;font-size:13px;line-height:17px;color:#2b3235;transform:scaleX(0.8867);">ByLayer</div>
<div class="tx" style="left:572.70px;top:128.70px;font-size:13px;line-height:17px;color:#2b3235;transform:scaleX(0.8867);">ByLayer</div>
<div class="tx" style="left:19.70px;top:163.30px;font-size:13px;line-height:17px;color:#2b3235;transform:scaleX(0.9254);">Liberation Sans</div>
<div class="tx" style="left:487.00px;top:164.00px;font-size:13px;line-height:17px;color:#2b3235;transform:scaleX(0.9540);">Custom 12.00 pt</div>
<div class="tx" style="left:348.90px;top:158.18px;font-size:20.2px;line-height:26px;color:#1a1a1a;font-family:'Liberation Serif',serif;font-weight:bold;transform:scaleX(0.9578);">B</div>
<div class="tx" style="left:380.30px;top:158.35px;font-size:19.7px;line-height:26px;color:#1a1a1a;font-family:'Liberation Serif',serif;font-style:italic;">I</div>
<div class="tx" style="left:404.60px;top:160.27px;font-size:15.5px;line-height:20px;color:#1a1a1a;font-family:'Liberation Serif',serif;">U</div>
<div class="tx" style="left:433.20px;top:158.35px;font-size:19.7px;line-height:26px;color:#1a1a1a;font-family:'Liberation Serif',serif;">S</div>
<div class="tx" style="left:460.60px;top:162.17px;font-size:15.8px;line-height:21px;color:#1a1a1a;font-family:'Liberation Serif',serif;">O</div>
<div class="tx" style="left:222.50px;top:189.80px;font-size:15px;line-height:20px;color:#2e3840;font-weight:bold;transform:scaleX(1.0040);">Properties</div>
<div class="tx" style="left:196.00px;top:230.50px;font-size:13px;line-height:17px;color:#2b3235;transform:scaleX(0.9496);">No Selection</div>
<div class="tx" style="left:193.00px;top:277.50px;font-size:13px;line-height:17px;color:#2b3235;font-weight:bold;transform:scaleX(0.9293);">General</div>
<div class="tx" style="left:225.80px;top:309.78px;font-size:14.2px;line-height:18px;color:#3a4246;transform:scaleX(1.0366);">Layer</div>
<div class="tx" style="left:225.80px;top:342.48px;font-size:14.2px;line-height:18px;color:#3a4246;transform:scaleX(1.0618);">Color</div>
<div class="tx" style="left:233.50px;top:396.10px;font-size:15px;line-height:20px;color:#2e3840;font-weight:bold;transform:scaleX(1.0060);">History</div>
<div class="tx" style="left:200.00px;top:421.50px;font-size:13px;line-height:17px;color:#ffffff;transform:scaleX(0.9305);">Open</div>
<div class="tx" style="left:550.00px;top:196.50px;font-size:13px;line-height:17px;color:#2b3235;transform:scaleX(0.9443);">spiral6.csv</div>
<div class="tx" style="left:3.00px;top:617.17px;font-size:12.5px;line-height:16px;color:#2b3235;transform:scaleX(0.9836);">-43.0540, -16.5110</div>
<div class="tx" style="left:304.00px;top:617.94px;font-size:12px;line-height:16px;color:#2b3235;transform:scaleX(0.9576);">SNAP</div>
<div class="tx" style="left:359.70px;top:617.94px;font-size:12px;line-height:16px;color:#ffffff;transform:scaleX(0.9367);">GRID</div>
<div class="tx" style="left:412.50px;top:617.94px;font-size:12px;line-height:16px;color:#ffffff;transform:scaleX(0.8909);">RULER</div>
<div class="tx" style="left:472.80px;top:617.94px;font-size:12px;line-height:16px;color:#2b3235;transform:scaleX(0.9786);">ORTHO</div>
<div class="tx" style="left:539.00px;top:617.94px;font-size:12px;line-height:16px;color:#2b3235;transform:scaleX(0.9339);">POLAR</div>
<div class="tx" style="left:601.40px;top:617.94px;font-size:12px;line-height:16px;color:#ffffff;transform:scaleX(0.9520);">QSNAP</div>
<div class="tx" style="left:666.00px;top:617.94px;font-size:12px;line-height:16px;color:#2b3235;transform:scaleX(0.9397);">QTRACK</div>
<div class="tx" style="left:738.00px;top:617.94px;font-size:12px;line-height:16px;color:#2b3235;">LWT</div>
<div class="tx" style="left:15.50px;top:536.72px;font-size:11.5px;line-height:15px;color:#111;font-family:'DejaVu Sans Mono','Liberation Mono',monospace;">Welcome to Embroidermodder 2!</div>
<div class="tx" style="left:15.50px;top:550.12px;font-size:11.5px;line-height:15px;color:#111;font-family:'DejaVu Sans Mono','Liberation Mono',monospace;">Open some of our sample files. Many formats are supported.</div>
<div class="tx" style="left:15.50px;top:563.52px;font-size:11.5px;line-height:15px;color:#111;font-family:'DejaVu Sans Mono','Liberation Mono',monospace;">For help, press F1.</div>
<div class="tx" style="left:13.75px;top:589.82px;font-size:11.5px;line-height:15px;color:#111;font-family:'DejaVu Sans Mono','Liberation Mono',monospace;font-weight:bold;transform:scaleX(0.9704);">Command:</div>
</body></html>
